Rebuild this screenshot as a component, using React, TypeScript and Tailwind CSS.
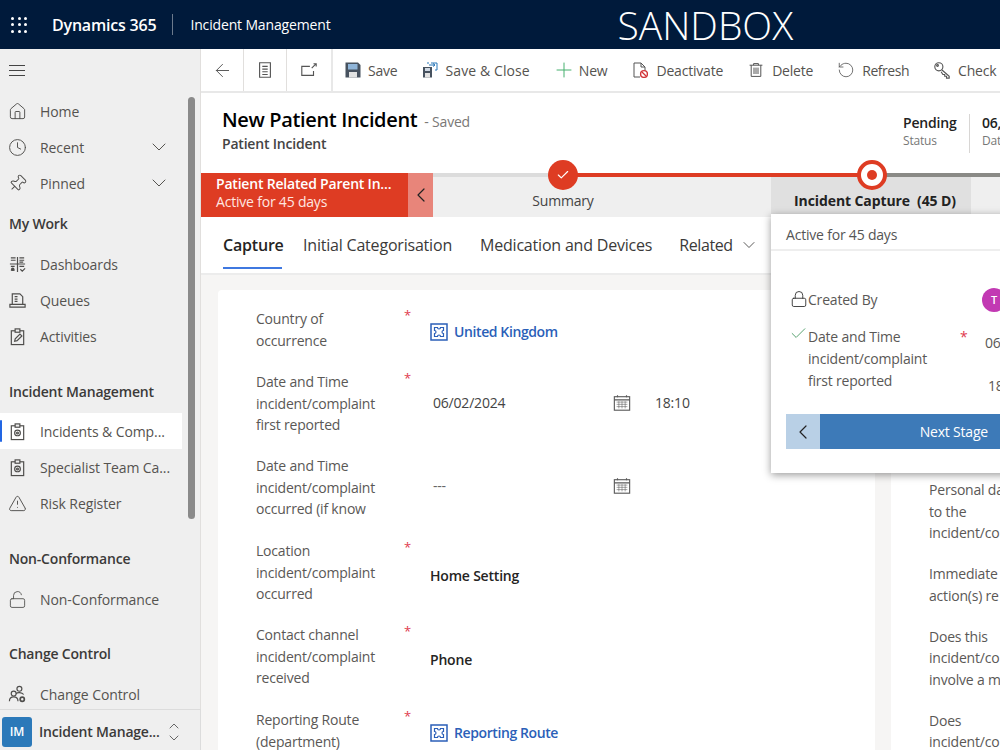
import { ArrowLeft, Check, ChevronDown, ChevronLeft, ChevronUp, Clock, Home, Lock, LockOpen, Pin, Plus, RotateCw, TriangleAlert } from "lucide-react";

function Svg({ children, className = "h-4 w-4" }: { children: React.ReactNode; className?: string }) {
  return (
    <svg viewBox="0 0 20 20" fill="none" stroke="currentColor" strokeWidth="1.25" className={`shrink-0 ${className}`}>
      {children}
    </svg>
  );
}

const ClipGear = () => (
  <Svg className="h-[19px] w-[19px]">
    <rect x="3.5" y="4" width="13" height="14.5" />
    <rect x="7.5" y="2" width="5" height="3.5" fill="#efefef" />
    <circle cx="10" cy="11.5" r="3" />
    <circle cx="10" cy="11.5" r="1" />
  </Svg>
);

const Dash = () => (
  <Svg className="h-[19px] w-[19px]">
    <path d="M10 2v16M2 9.5h16M3 3h5M3 5.5h5M12 3h5M12 5.5h5M12 7.5h4M3 12h4M12 12h5M3 16h4M13 15l2 2 3-3" />
    <circle cx="5" cy="15" r="1.2" fill="currentColor" />
  </Svg>
);

const Queue = () => (
  <Svg className="h-[19px] w-[19px]">
    <path d="M4.5 14V3h8l3 3v8M2 14h16v3H2zM7 6h3M7 8.5h3M7 11h3" />
  </Svg>
);

const Activity = () => (
  <Svg className="h-[19px] w-[19px]">
    <rect x="3.5" y="4" width="13" height="14.5" />
    <rect x="7.5" y="2" width="5" height="3.5" fill="#efefef" />
    <path d="M7 15l.6-2.6 5-5 2 2-5 5z" />
  </Svg>
);

const People = () => (
  <Svg className="h-[19px] w-[19px]">
    <circle cx="6" cy="9" r="2.6" />
    <circle cx="12" cy="4" r="2.6" />
    <path d="M1.5 17c0-6 9-6 9 0M8.5 9c1.5-1.5 6-1.5 8 1" />
    <circle cx="15" cy="15" r="2.2" strokeWidth="1.8" />
  </Svg>
);

const thin = "h-[19px] w-[19px] shrink-0";

function NavItem({ icon, label, chevron, active }: { icon: React.ReactNode; label: string; chevron?: boolean; active?: boolean }) {
  return (
    <div className={`relative flex h-[36px] w-[182px] items-center pl-[8px] text-[14px] tracking-[-0.1px] text-[#55534f] ${active ? "bg-white" : ""}`}>
      {active && <span className="absolute left-0 top-[7px] h-[22px] w-[2px] rounded-full bg-[#2266e3]" />}
      <span className="flex w-[32px] shrink-0 items-center text-[#4f4e4c]">{icon}</span>
      <span className="whitespace-nowrap">{label}</span>
      {chevron && <ChevronDown strokeWidth={1} className="absolute left-[147px] h-[24px] w-[24px] text-[#55534f]" />}
    </div>
  );
}

function NavHeading({ label, className }: { label: string; className: string }) {
  return <div className={`pl-[9px] text-[14px] font-semibold leading-[20px] text-[#3b3a39] ${className}`}>{label}</div>;
}

function Sidebar() {
  return (
    <aside className="relative flex h-[701px] w-[201px] shrink-0 flex-col border-r border-[#e1dfdd] bg-[#efefef]">
      <div className="h-[44px] pl-[9px] pt-[16px]">
        <div className="h-[11px] w-[16px] border-y border-[#444] py-[4px]">
          <div className="h-px bg-[#444]" />
        </div>
      </div>
      <NavItem icon={<Home strokeWidth={1.2} className={thin} />} label="Home" />
      <NavItem icon={<Clock strokeWidth={1.2} className={thin} />} label="Recent" chevron />
      <NavItem icon={<Pin strokeWidth={1.2} className={`${thin} rotate-45`} />} label="Pinned" chevron />
      <NavHeading label="My Work" className="mt-[13px] mb-[12px]" />
      <NavItem icon={<Dash />} label="Dashboards" />
      <NavItem icon={<Queue />} label="Queues" />
      <NavItem icon={<Activity />} label="Activities" />
      <NavHeading label="Incident Management" className="mt-[28px] mb-[11px]" />
      <NavItem icon={<ClipGear />} label="Incidents & Comp..." active />
      <NavItem icon={<ClipGear />} label="Specialist Team Ca..." />
      <NavItem icon={<TriangleAlert strokeWidth={1.2} className={thin} />} label="Risk Register" />
      <NavHeading label="Non-Conformance" className="mt-[28px] mb-[12px]" />
      <NavItem icon={<LockOpen strokeWidth={1.1} className={thin} />} label="Non-Conformance" />
      <NavHeading label="Change Control" className="mt-[27px] mb-[12px]" />
      <NavItem icon={<People />} label="Change Control" />
      <div className="absolute left-[188px] top-[48px] h-[422px] w-[7px] rounded-full bg-[#8a8a8a]" />
    </aside>
  );
}

function Tool({ icon, label, className }: { icon: React.ReactNode; label: string; className: string }) {
  return (
    <div className={`flex shrink-0 items-center whitespace-nowrap text-[14px] text-[#55534f] ${className}`}>
      {icon}
      {label}
    </div>
  );
}

function CommandBar() {
  return (
    <div className="flex h-[44px] shrink-0 items-center border-b-2 border-[#e8e8e8] bg-white">
      <div className="flex h-[42px] w-[43px] items-center justify-center border-r border-[#e1dfdd] text-[#555]">
        <ArrowLeft strokeWidth={1.1} className="h-[21px] w-[21px]" />
      </div>
      <div className="flex h-[42px] w-[43px] items-center justify-center border-r border-[#e1dfdd] text-[#555]">
        <Svg className="h-[18px] w-[18px]">
          <path d="M4 2h12v16H4zM7 6h6M7 9h6M7 12h6M7 15h6" />
        </Svg>
      </div>
      <div className="flex h-[44px] w-[46px] items-center justify-center border-r-2 border-[#e8e8e8] text-[#555]">
        <Svg className="h-[18px] w-[18px]">
          <path d="M11 6H2v10h13v-5M13 8l5-5M15 3h3v3" />
        </Svg>
      </div>
      <Tool
        className="ml-[12px] gap-[7px]"
        label="Save"
        icon={
          <svg viewBox="0 0 16 16" className="h-4 w-4">
            <path d="M0.5 0.5h12.5l2.5 2.5v12.5H0.5z" fill="#47525f" />
            <rect x="3" y="2" width="9.5" height="5.5" fill="#8fb5d9" />
            <rect x="4" y="10" width="8" height="5.5" fill="#e2e2e2" />
          </svg>
        }
      />
      <Tool
        className="ml-[24px] gap-[8px] tracking-[0.1px]"
        label="Save & Close"
        icon={
          <svg viewBox="0 0 16 16" className="h-4 w-4">
            <path d="M1 5h9v10.5H1z" fill="#47525f" />
            <rect x="3" y="6" width="5" height="3" fill="#cfd8e3" />
            <rect x="3" y="11" width="5" height="4.5" fill="#e2e2e2" />
            <path d="M5 1h2M9 1h6v7h-2M7 3h6M11 1.5L13 3l-2 1.5" fill="none" stroke="#2b79b9" />
          </svg>
        }
      />
      <Tool className="ml-[25px] gap-[6px]" label="New" icon={<Plus strokeWidth={1} className="-m-[3px] mr-[-3px] h-[24px] w-[24px] text-[#46b06e]" />} />
      <Tool
        className="ml-[25px] gap-[8px]"
        label="Deactivate"
        icon={
          <svg viewBox="0 0 16 16" className="h-4 w-4 shrink-0">
            <path d="M2 1h7l4 4v4M9 1v4h4M2 1v14h6" fill="none" stroke="#555" />
            <circle cx="12" cy="12" r="3.4" fill="#fff" stroke="#d13438" strokeWidth="1.4" />
            <path d="M10 10l4 4" stroke="#d13438" strokeWidth="1.2" />
          </svg>
        }
      />
      <Tool
        className="ml-[25px] gap-[8px]"
        label="Delete"
        icon={
          <Svg className="h-4 w-4 text-[#555]">
            <path d="M2 4h16M7 4V2h6v2M4 4v14h12V4M7.5 7v8M10 7v8M12.5 7v8" />
          </Svg>
        }
      />
      <Tool className="ml-[24px] gap-[7px] tracking-[-0.45px]" label="Refresh" icon={<RotateCw strokeWidth={1.1} className="-scale-x-100 h-[18px] w-[18px] text-[#555]" />} />
      <Tool
        className="ml-[24px] gap-[7px]"
        label="Check"
        icon={
          <Svg className="h-[18px] w-[18px] text-[#555]">
            <circle cx="6.5" cy="6.5" r="4.5" />
            <circle cx="5" cy="5" r="1" />
            <path d="M10 10l8 7v2h-3v-2h-2v-2h-2l-2-3" />
          </Svg>
        }
      />
    </div>
  );
}

function TitleBlock() {
  return (
    <div className="flex h-[80px] shrink-0 bg-white pl-[21px]">
      <div className="pt-[12px]">
        <div className="flex items-baseline gap-[7px] whitespace-nowrap">
          <span className="text-[20px] font-semibold leading-[29px] tracking-[-0.35px] text-black">New Patient Incident</span>
          <span className="text-[14px] text-[#7a7876]">- Saved</span>
        </div>
        <div className="text-[14px] font-semibold leading-[20px] text-[#444]">Patient Incident</div>
      </div>
      <div className="ml-auto mt-[21px] flex h-[39px]">
        <div className="w-[66px]">
          <div className="text-[14px] font-semibold leading-[18px] text-[#222]">Pending</div>
          <div className="text-[12px] leading-[18px] text-[#777]">Status</div>
        </div>
        <div className="w-[31px] border-l border-[#d8d6d4] pl-[12px]">
          <div className="text-[14px] font-semibold leading-[18px] text-[#222]">06,</div>
          <div className="text-[12px] leading-[18px] text-[#777]">Dat</div>
        </div>
      </div>
    </div>
  );
}

function StageBar() {
  return (
    <div className="relative flex h-[44px] shrink-0 bg-[#efefef]">
      <div className="flex h-[44px] w-[207px] shrink-0 flex-col justify-center bg-[#de3c23] pb-[4px] pl-[15px] text-[14px] leading-[18px] text-white">
        <div className="whitespace-nowrap font-semibold">Patient Related Parent In...</div>
        <div className="text-[#ffe6e0]">Active for 45 days</div>
      </div>
      <div className="flex h-[44px] w-[25px] shrink-0 items-center justify-center bg-[#e8857a] text-[#222]">
        <ChevronLeft strokeWidth={1.2} className="h-[24px] w-[24px]" />
      </div>
      <div className="flex w-[338px] shrink-0 items-end justify-center pb-[6px] pr-[78px] text-[14px] leading-[20px] text-[#444]">Summary</div>
      <div className="mt-[4px] flex h-[37px] w-[200px] shrink-0 items-end justify-center bg-[#e0e0e0] pb-[3px] pl-[8px] text-[14px] font-bold leading-[20px] tracking-[-0.1px] text-[#222]">
        <span className="whitespace-pre">Incident Capture  (45 D)</span>
      </div>
      <div className="absolute left-[232px] right-0 top-0 h-[4px] bg-[#dcdcdc]" />
      <div className="absolute left-[375px] top-0 h-[4px] w-[295px] bg-[#de3c23]" />
      <div className="absolute left-[670px] right-0 top-0 h-[4px] bg-[#8a8a86]" />
      <div className="absolute left-[347px] top-[-13px] flex h-[30px] w-[30px] items-center justify-center rounded-full bg-[#de3c23] text-white">
        <Check strokeWidth={2} className="h-[14px] w-[14px]" />
      </div>
      <div className="absolute left-[656px] top-[-13px] flex h-[30px] w-[30px] items-center justify-center rounded-full border-[4px] border-[#de3c23] bg-white">
        <span className="h-[10px] w-[10px] rounded-full bg-[#de3c23]" />
      </div>
    </div>
  );
}

function Tabs() {
  return (
    <div className="flex h-[58px] shrink-0 border-b-2 border-[#ececec] bg-white pl-[22px] text-[16px] leading-[22px] text-[#3b3a39]">
      <div className="relative mt-[17px] w-[59px] font-semibold text-[#252423]">
        Capture
        <span className="absolute left-0 right-0 top-[33px] h-[2px] bg-[#3f78e0]" />
      </div>
      <div className="ml-[21px] mt-[17px] whitespace-nowrap">Initial Categorisation</div>
      <div className="ml-[28px] mt-[17px] whitespace-nowrap">Medication and Devices</div>
      <div className="ml-[27px] mt-[17px] flex items-start gap-[6px] whitespace-nowrap tracking-[-0.4px]">
        Related
        <ChevronDown strokeWidth={1} className="mt-[1px] h-[20px] w-[20px]" />
      </div>
    </div>
  );
}

const Calendar = () => (
  <Svg className="h-[18px] w-[18px] text-[#5a5a5a]">
    <rect x="1.5" y="3" width="17" height="15" />
    <path d="M1.5 6.5h17M5 1.5v2M15 1.5v2" />
    <path d="M4 9h12M4 11.5h12M4 14h12M6.5 8v8M10 8v8M13.5 8v8" strokeWidth="0.6" />
  </Svg>
);

const EntityIcon = () => (
  <svg viewBox="0 0 18 18" fill="none" stroke="#2b5fb8" strokeWidth="1.5" className="h-[18px] w-[18px] shrink-0">
    <rect x="1" y="1" width="16" height="16" />
    <path d="M4.5 4.5h3a1.5 1.5 0 0 0 3 0h3v3a1.5 1.5 0 0 0 0 3v3h-3a1.5 1.5 0 0 0-3 0h-3v-3a1.5 1.5 0 0 0 0-3z" strokeWidth="1.2" />
  </svg>
);

function FormRow({ lines, required, height, children }: { lines: string[]; required?: boolean; height: string; children: React.ReactNode }) {
  return (
    <div className={`flex items-stretch ${height}`}>
      <div className="relative w-[174px] shrink-0 text-[14px] leading-[21.5px] text-[#5a5856]">
        {lines.map((l) => (
          <div key={l} className="whitespace-nowrap">
            {l}
          </div>
        ))}
        {required && <span className="absolute left-[148px] top-[-3px] text-[13px] text-[#e03a4e]">*</span>}
      </div>
      <div className="min-w-0 flex-1">{children}</div>
    </div>
  );
}

function LinkValue({ label }: { label: string }) {
  return (
    <div className="flex items-center gap-[6px] text-[14px] font-semibold tracking-[-0.4px] text-[#2b5fb8]">
      <EntityIcon />
      {label}
    </div>
  );
}

function MainCard() {
  return (
    <div className="h-[470px] w-[657px] shrink-0 rounded-t-[4px] bg-white pl-[38px] pt-[18px]">
      <FormRow lines={["Country of", "occurrence"]} required height="h-[63px]">
        <div className="pt-[13px]">
          <LinkValue label="United Kingdom" />
        </div>
      </FormRow>
      <FormRow lines={["Date and Time", "incident/complaint", "first reported"]} required height="h-[84px]">
        <div className="flex items-center pl-[3px] pt-[21px] text-[14px] text-[#444]">
          <span className="w-[180px]">06/02/2024</span>
          <Calendar />
          <span className="ml-[24px]">18:10</span>
        </div>
      </FormRow>
      <FormRow lines={["Date and Time", "incident/complaint", "occurred (if know"]} height="h-[85px]">
        <div className="flex items-center pl-[3px] pt-[20px] text-[14px] text-[#666]">
          <span className="w-[180px]">---</span>
          <Calendar />
        </div>
      </FormRow>
      <FormRow lines={["Location", "incident/complaint", "occurred"]} required height="h-[84px]">
        <div className="pt-[25px] text-[14px] font-semibold text-[#252423]">Home Setting</div>
      </FormRow>
      <FormRow lines={["Contact channel", "incident/complaint", "received"]} required height="h-[85px]">
        <div className="pt-[25px] text-[14px] font-semibold text-[#252423]">Phone</div>
      </FormRow>
      <FormRow lines={["Reporting Route", "(department)"]} required height="h-[50px]">
        <div className="pt-[13px]">
          <LinkValue label="Reporting Route" />
        </div>
      </FormRow>
    </div>
  );
}

function SideCard() {
  const groups = [
    ["Personal da", "to the", "incident/co"],
    ["Immediate", "action(s) re"],
    ["Does this", "incident/co", "involve a m"],
    ["Does", "incident/co"],
  ];
  return (
    <div className="flex h-[470px] w-[140px] shrink-0 flex-col gap-[19.5px] rounded-t-[4px] bg-white pl-[38px] pt-[189px] text-[14px] leading-[21.5px] text-[#5a5856]">
      {groups.map((g) => (
        <div key={g.join()}>
          {g.map((l, i) => (
            <div key={i} className="whitespace-nowrap">
              {l}
            </div>
          ))}
        </div>
      ))}
    </div>
  );
}

function StageFlyout() {
  return (
    <div className="absolute left-[570px] top-[165px] h-[259px] w-[240px] bg-white text-[14px] text-[#5a5856] shadow-[0_2px_8px_rgba(0,0,0,0.4)]">
      <div className="flex h-[37px] items-center border-b-2 border-[#eeeeee] pl-[15px] pt-[6px] text-[#555]">Active for 45 days</div>
      <div className="flex h-[42px] items-start pl-[19px] pt-[39px]">
        <Lock strokeWidth={1.2} className="h-[18px] w-[18px] shrink-0 text-[#333]" />
        <span className="whitespace-nowrap leading-[20px]">Created By</span>
        <span className="absolute left-[211px] top-[74px] flex h-[24px] w-[24px] items-center justify-center rounded-full bg-[#c239b3] text-[11px] font-semibold text-white">T</span>
      </div>
      <div className="relative mt-[33px] flex pl-[18px] leading-[22px]">
        <Check strokeWidth={1.2} className="mt-[-2px] h-[19px] w-[19px] shrink-0 text-[#4f9d69]" />
        <div className="whitespace-nowrap">
          <div>Date and Time</div>
          <div>incident/complaint</div>
          <div>first reported</div>
        </div>
        <span className="absolute left-[189px] top-0 text-[#e03a4e]">*</span>
        <span className="absolute left-[214px] top-[6px]">06</span>
        <span className="absolute left-[217px] top-[49px]">18</span>
      </div>
      <div className="ml-[15px] mt-[22px] flex h-[35px] w-[214px]">
        <div className="flex w-[34px] items-center justify-center bg-[#b9d0e6] text-[#222]">
          <ChevronLeft strokeWidth={1.2} className="h-[24px] w-[24px]" />
        </div>
        <div className="flex flex-1 items-center justify-end bg-[#3d7ab8] pr-[12px] text-white">Next Stage</div>
      </div>
    </div>
  );
}

export default function App() {
  return (
    <div className="h-[750px] w-[1000px] overflow-hidden font-['Open_Sans',sans-serif] tracking-[-0.2px]">
      <header className="flex h-[49px] items-center bg-[#001a3b] text-white">
        <div className="ml-[11px] grid w-[16px] grid-cols-3 gap-[3.5px]">
          {Array.from({ length: 9 }).map((_, i) => (
            <span key={i} className="h-[3px] w-[3px] rounded-full bg-white" />
          ))}
        </div>
        <span className="ml-[25px] whitespace-nowrap text-[16px] font-semibold">Dynamics 365</span>
        <span className="ml-[16px] h-[21px] w-px bg-[#6c7a8c]" />
        <span className="ml-[17px] whitespace-nowrap text-[14px] tracking-[-0.15px]">Incident Management</span>
        <span className="ml-[287px] whitespace-nowrap text-[39px] font-light leading-[49px] tracking-normal">SANDBOX</span>
      </header>
      <div className="flex h-[701px]">
        <Sidebar />
        <main className="relative flex min-w-0 flex-1 flex-col overflow-hidden">
          <CommandBar />
          <TitleBlock />
          <StageBar />
          <Tabs />
          <div className="flex flex-1 gap-[16px] overflow-hidden bg-[#f6f5f4] pl-[17px] pt-[15px]">
            <MainCard />
            <SideCard />
          </div>
          <StageFlyout />
        </main>
      </div>
      <div className="relative -mt-[41px] flex h-[41px] w-[201px] items-center border-r border-t border-[#dcdcdc] bg-[#efefef] pt-[3px]">
        <span className="ml-[2px] flex h-[30px] w-[30px] items-center justify-center rounded-[3px] bg-[#2b79b9] text-[12px] font-semibold text-white">IM</span>
        <span className="ml-[7px] whitespace-nowrap text-[14px] font-semibold text-[#3b3a39]">Incident Manage...</span>
        <span className="ml-[6px] flex flex-col text-[#444]">
          <ChevronUp strokeWidth={1.2} className="-mb-[4px] h-[16px] w-[16px]" />
          <ChevronDown strokeWidth={1.2} className="h-[16px] w-[16px]" />
        </span>
      </div>
    </div>
  );
}
